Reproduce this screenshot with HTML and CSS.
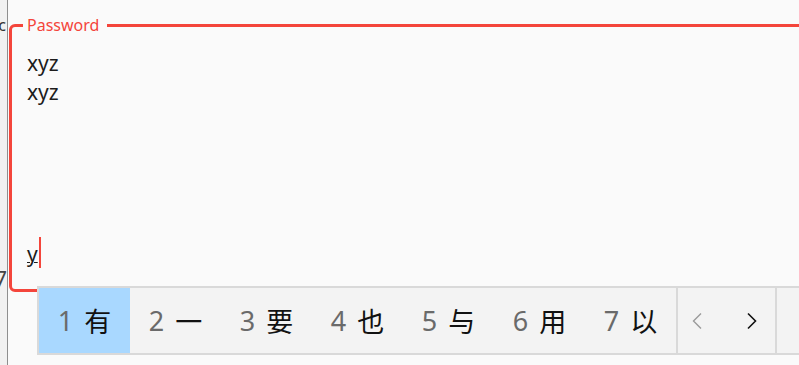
FILE: index.html
```html
<!DOCTYPE html>
<html lang="zh">
<head>
<meta charset="utf-8">
<link rel="stylesheet" href="styles.css">
</head>
<body>
<div class="app">
  <div class="side">
    <span class="side-c">c</span>
    <span class="side-7">7</span>
  </div>
  <div class="main">
    <div class="field">
      <span class="legend">Password</span>
      <div class="lines">
        <div class="line">xyz</div>
        <div class="line">xyz</div>
      </div>
      <div class="line compose"><span class="pre">y</span><span class="caret"></span></div>
    </div>
  </div>
</div>
<div class="cands">
  <div class="cand sel"><span class="num">1</span><span class="ch">有</span></div>
  <div class="cand"><span class="num">2</span><span class="ch">一</span></div>
  <div class="cand"><span class="num">3</span><span class="ch">要</span></div>
  <div class="cand"><span class="num">4</span><span class="ch">也</span></div>
  <div class="cand"><span class="num">5</span><span class="ch">与</span></div>
  <div class="cand"><span class="num">6</span><span class="ch">用</span></div>
  <div class="cand"><span class="num">7</span><span class="ch">以</span></div>
  <div class="nav">
    <svg class="arrow" width="12" height="18" viewBox="0 0 12 18"><path d="M10 1.5 L2.5 9 L10 16.5" fill="none" stroke="#9a9a9a" stroke-width="1.4"/></svg>
    <svg class="arrow" width="12" height="18" viewBox="0 0 12 18"><path d="M2 1.5 L9.5 9 L2 16.5" fill="none" stroke="#111" stroke-width="1.6"/></svg>
  </div>
  <div class="rest"></div>
</div>
</body>
</html>
```

FILE: styles.css
```css
html, body {
  margin: 0;
  padding: 0;
}
body {
  width: 799px;
  height: 365px;
  overflow: hidden;
  background: #fafafa;
  position: relative;
  font-family: "Noto Sans", "Noto Sans CJK SC", sans-serif;
}
.app {
  display: flex;
  height: 365px;
}
.side {
  width: 7px;
  flex: none;
  background: #f1f1f1;
  border-right: 1px solid #8e8e8e;
  overflow: hidden;
  display: flex;
  flex-direction: column;
  align-items: flex-end;
}
.side-c {
  margin-top: 17px;
  font-size: 16px;
  line-height: 17px;
  color: #333;
  margin-right: 1px;
}
.side-7 {
  margin-top: 231px;
  font-size: 22px;
  line-height: 26px;
  color: #444;
}
.main {
  flex: 1;
  min-width: 0;
  padding-top: 24px;
  padding-left: 1px;
  margin-right: -20px;
}
.field {
  position: relative;
  box-sizing: border-box;
  height: 268px;
  border: 3px solid #f4453b;
  border-radius: 6px;
  padding: 22px 0 23px 15px;
  display: flex;
  flex-direction: column;
  justify-content: space-between;
}
.legend {
  position: absolute;
  top: -12px;
  left: 11px;
  padding: 0 8px 0 4px;
  background: #fafafa;
  color: #f4453b;
  font-size: 16px;
  line-height: 20px;
}
.line {
  font-size: 21px;
  line-height: 29px;
  color: #1c1c1c;
  height: 29px;
}
.pre {
  text-decoration: underline;
  text-decoration-thickness: 1px;
  text-underline-offset: 0px;
}
.caret {
  display: inline-block;
  width: 2px;
  height: 31px;
  background: #f4453b;
  vertical-align: -6px;
  margin-left: 1px;
}
.cands {
  position: absolute;
  left: 37px;
  top: 286px;
  right: -20px;
  height: 69px;
  box-sizing: border-box;
  border: 2px solid #d9d9d9;
  background: #f3f3f3;
  display: flex;
}
.cand {
  width: 91px;
  flex: none;
  display: flex;
  align-items: center;
  justify-content: center;
  gap: 11px;
}
.cand.sel {
  background: #a9d8ff;
}
.num {
  color: #6a6a6a;
  font-family: "Noto Sans", sans-serif;
  font-size: 27px;
  line-height: 36px;
}
.ch {
  color: #111;
  font-family: "Noto Sans CJK SC", sans-serif;
  font-size: 27px;
  line-height: 36px;
}
.nav {
  width: 101px;
  flex: none;
  border-left: 2px solid #d9d9d9;
  border-right: 2px solid #d9d9d9;
  display: flex;
  align-items: center;
  padding-left: 13px;
  box-sizing: border-box;
  gap: 43px;
}
.rest {
  flex: 1;
}
```
